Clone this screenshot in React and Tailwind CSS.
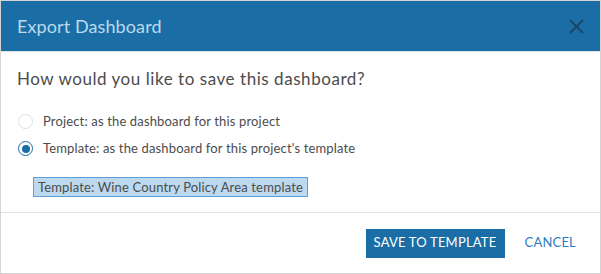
import { useState } from 'react';

export default function App() {
  const [choice, setChoice] = useState('template');

  return (
    <div className="w-[601px] h-[274px] bg-white border border-[#d4d4d4] flex flex-col" style={{ fontFamily: 'Lato, "Open Sans", sans-serif' }}>
      <div className="h-[50px] bg-[#1a6ea5] flex items-center justify-between pl-4 pr-[16px] border-b border-[#e4e4e4] box-content">
        <h1 className="text-[18px] text-[#bcd9ee] font-normal tracking-[0.1px]">Export Dashboard</h1>
        <button className="text-[#1c4566]">
          <svg width="15" height="15" viewBox="0 0 15 15">
            <path d="M1 1 L14 14 M14 1 L1 14" stroke="currentColor" strokeWidth="2" />
          </svg>
        </button>
      </div>

      <div className="flex-1 px-4 pt-[14px]">
        <p className="text-[17px] text-[#4c4c4c] tracking-[0.55px]">How would you like to save this dashboard?</p>

        <div className="mt-[20px] flex flex-col gap-[8px] pl-[1px]">
          <label className="flex items-center gap-[10px] text-[13px] text-[#4c4c4c] tracking-[0.15px]" onClick={() => setChoice('project')}>
            <span className={`w-[15px] h-[15px] rounded-full border flex items-center justify-center ${choice === 'project' ? 'border-[#1a6ea5]' : 'border-[#dedede]'}`}>
              {choice === 'project' && <span className="w-[8px] h-[8px] rounded-full bg-[#1a6ea5]" />}
            </span>
            Project: as the dashboard for this project
          </label>
          <label className="flex items-center gap-[10px] text-[13px] text-[#4c4c4c] tracking-[0.15px]" onClick={() => setChoice('template')}>
            <span className={`w-[15px] h-[15px] rounded-full border flex items-center justify-center ${choice === 'template' ? 'border-[#1a6ea5]' : 'border-[#dedede]'}`}>
              {choice === 'template' && <span className="w-[8px] h-[8px] rounded-full bg-[#1a6ea5]" />}
            </span>
            Template: as the dashboard for this project's template
          </label>
        </div>

        <div className="mt-[18px] ml-[16px] inline-block bg-[#bcd9ef] border border-[#5d9fd6] px-[4px] h-[20px] leading-[18px] text-[13px] text-[#4c4c4c] tracking-[0.15px]">
          Template: Wine Country Policy Area template
        </div>
      </div>

      <div className="h-[61px] border-t border-[#e4e4e4] flex items-center justify-end pr-[24px] gap-[20px]">
        <button className="h-[29px] px-[8px] w-[139px] bg-[#1a6ea5] text-white text-[13px] uppercase tracking-[0.2px]">Save to Template</button>
        <button className="text-[#2d7dc1] text-[13px] uppercase tracking-[0.2px]">Cancel</button>
      </div>
    </div>
  );
}
